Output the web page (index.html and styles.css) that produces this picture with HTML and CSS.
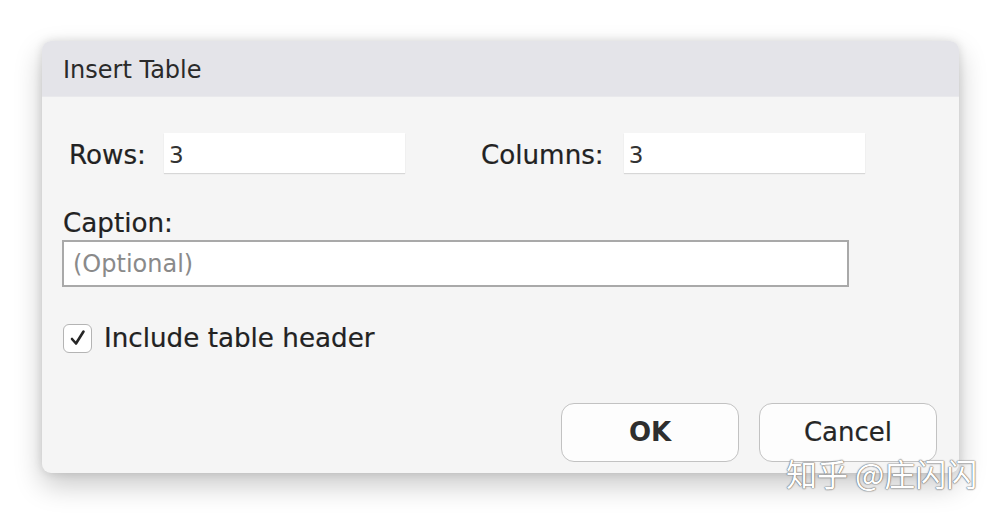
FILE: index.html
```html
<!DOCTYPE html>
<html>
<head>
<meta charset="utf-8">
<link rel="stylesheet" href="styles.css">
</head>
<body>
<div class="dialog">
  <div class="titlebar">Insert Table</div>
  <div class="content">
    <div class="dims">
      <label class="lbl rows-lbl">Rows:</label>
      <div class="field num">3</div>
      <label class="lbl cols-lbl">Columns:</label>
      <div class="field num">3</div>
    </div>
    <div class="lbl caption-lbl">Caption:</div>
    <div class="caption-input">(Optional)</div>
    <div class="check-row">
      <span class="checkbox">
        <svg width="20" height="20" viewBox="0 0 20 20"><path d="M4 11 L8 15.5 L15.5 3.5" fill="none" stroke="#262626" stroke-width="2.6" stroke-linecap="round" stroke-linejoin="round"/></svg>
      </span>
      <span class="lbl">Include table header</span>
    </div>
    <div class="buttons">
      <button class="btn ok">OK</button>
      <button class="btn">Cancel</button>
    </div>
  </div>
</div>
<div class="watermark">知乎 @庄闪闪</div>
</body>
</html>
```
FILE: styles.css
```css
html, body {
  margin: 0;
  padding: 0;
  background: #ffffff;
  width: 1000px;
  height: 516px;
  overflow: hidden;
}
body {
  font-family: "DejaVu Sans", sans-serif;
  color: #262626;
  padding-top: 41px;
  padding-left: 42px;
  box-sizing: border-box;
  position: relative;
}
.dialog {
  width: 917px;
  height: 432px;
  background: #f5f5f5;
  border-radius: 9px;
  box-shadow: 0 12px 28px rgba(0,0,0,0.22), 0 0 10px rgba(0,0,0,0.12);
  display: flex;
  flex-direction: column;
  overflow: hidden;
}
.titlebar {
  height: 56px;
  flex: none;
  background: #e4e4e9;
  box-sizing: border-box;
  padding-left: 21px;
  padding-top: 1px;
  font-size: 24px;
  line-height: 56px;
  color: #2a2a2a;
  border-bottom: 1px solid #e9e9ec;
}
.content {
  flex: 1;
  display: flex;
  flex-direction: column;
  padding: 36px 22px 11px 21px;
}
.lbl {
  font-size: 26.2px;
  line-height: 30px;
  color: #222222;
  -webkit-text-stroke: 0.2px #222222;
}
.dims {
  display: flex;
  align-items: center;
  padding-left: 6px;
  height: 40px;
}
.dims .lbl { padding-top: 4px; }
.rows-lbl { margin-right: 18px; }
.cols-lbl { margin-left: 76px; margin-right: 20px; }
.field {
  width: 241px;
  height: 40px;
  background: #ffffff;
  box-sizing: border-box;
  box-shadow: 0 1px 1px rgba(0,0,0,0.12);
  font-size: 23px;
  line-height: 44px;
  padding-left: 5px;
  color: #333;
}
.caption-lbl {
  margin-top: 35px;
}
.caption-input {
  margin-top: 2px;
  width: 787px;
  height: 47px;
  box-sizing: border-box;
  border: 2px solid #a9a9a9;
  background: #ffffff;
  font-size: 24px;
  line-height: 45px;
  padding-left: 9px;
  color: #8a8a8a;
  margin-left: -1px;
}
.check-row {
  margin-top: 36px;
  display: flex;
  align-items: center;
  gap: 12px;
}
.checkbox {
  width: 29px;
  height: 29px;
  box-sizing: border-box;
  border: 1.5px solid #b4b4b4;
  border-radius: 6px;
  background: #ffffff;
  display: flex;
  align-items: center;
  justify-content: center;
}
.buttons {
  margin-top: auto;
  display: flex;
  justify-content: flex-end;
  gap: 20px;
}
.btn {
  width: 178px;
  height: 59px;
  box-sizing: border-box;
  border: 1.5px solid #c2c2c2;
  border-radius: 13px;
  background: #fdfdfd;
  font-family: "DejaVu Sans", sans-serif;
  font-size: 26px;
  color: #262626;
  padding: 0;
  padding-bottom: 2px;
  -webkit-text-stroke: 0.2px #262626;
}
.btn.ok { font-weight: bold; color: #2e2e2e; -webkit-text-stroke: 0; }
.watermark {
  position: absolute;
  left: 786px;
  top: 452px;
  font-family: "Noto Sans CJK SC", sans-serif;
  font-size: 31px;
  line-height: 42px;
  color: #ffffff;
  text-shadow: 0 0 1px #666, 0 0 1px #666, 0 0 2px #999;
}
```
